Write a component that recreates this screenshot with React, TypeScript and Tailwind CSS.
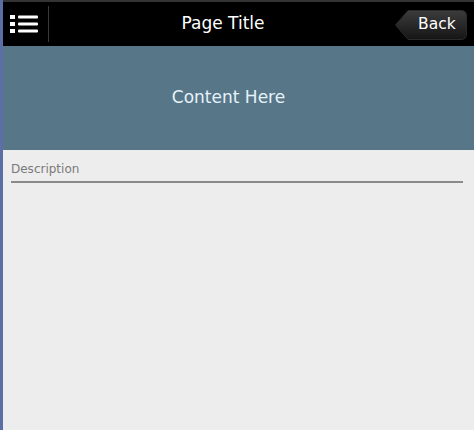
import React from "react";

function MenuIcon() {
  return (
    <svg width="30" height="22" viewBox="0 0 30 22" className="block">
      <rect x="1" y="2" width="5" height="4" fill="#fff" />
      <rect x="1" y="9" width="5" height="4" fill="#fff" />
      <rect x="1" y="16" width="5" height="4" fill="#fff" />
      <rect x="9" y="2.5" width="20" height="3" rx="1" fill="#fff" />
      <rect x="9" y="9.5" width="20" height="3" rx="1" fill="#fff" />
      <rect x="9" y="16.5" width="20" height="3" rx="1" fill="#fff" />
    </svg>
  );
}

function BackButton() {
  return (
    <button className="relative flex h-[30px] w-[72px] items-center pl-[23px] text-[15.5px] text-white">
      <svg
        width="72"
        height="30"
        viewBox="0 0 72 30"
        className="absolute inset-0"
        preserveAspectRatio="none"
      >
        <defs>
          <linearGradient id="bk" x1="0" y1="0" x2="0" y2="1">
            <stop offset="0" stopColor="#3c3c3c" />
            <stop offset="1" stopColor="#151515" />
          </linearGradient>
        </defs>
        <path
          d="M13 0.5 H66 Q71.5 0.5 71.5 6 V24 Q71.5 29.5 66 29.5 H13 L0.5 15 Z"
          fill="url(#bk)"
          stroke="#2a2a2a"
        />
      </svg>
      <span className="relative">Back</span>
    </button>
  );
}

export default function App() {
  return (
    <div
      className="flex h-[430px] w-[474px] flex-col border-l-[3px] border-[#5b6fa6] bg-[#ededed]"
      style={{ fontFamily: '"DejaVu Sans", Tahoma, sans-serif' }}
    >
      <div className="h-[2px] bg-[#333]" />
      <header className="flex h-[44px] items-center bg-black">
        <div className="flex h-full items-center pl-[6px] pr-[9px]">
          <MenuIcon />
        </div>
        <div className="h-[36px] w-px bg-[#3a3a3a]" />
        <h1 className="flex-1 pl-[2px] text-center text-[17px] text-white">Page Title</h1>
        <div className="self-start pr-[7px] pt-[8px]">
          <BackButton />
        </div>
      </header>
      <section className="flex h-[104px] items-center justify-center bg-[#577789] pr-[20px]">
        <span className="text-[17px] text-[#e6f2fa]">Content Here</span>
      </section>
      <div className="pl-[8px] pr-[11px] pt-[10px]">
        <div className="border-b-2 border-[#8a8a8a] pb-[3px] text-[12px] text-[#7a7a7a]">
          Description
        </div>
      </div>
    </div>
  );
}
